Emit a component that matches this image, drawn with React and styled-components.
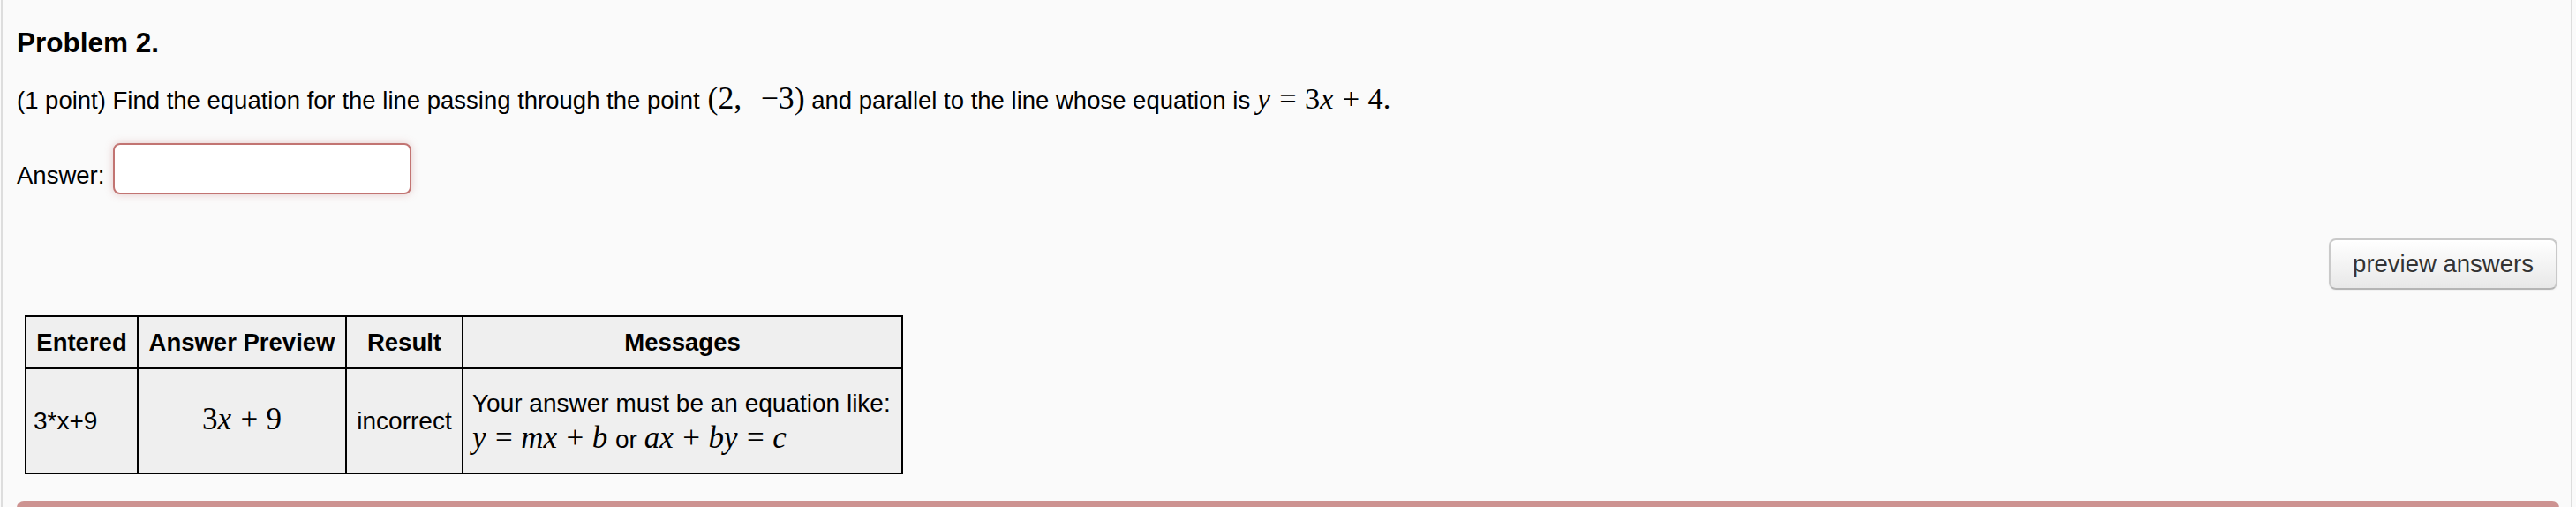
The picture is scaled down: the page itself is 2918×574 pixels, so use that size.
import React from 'react'
import styled, { createGlobalStyle } from 'styled-components'

const GlobalStyle = createGlobalStyle`
  html, body {
    margin: 0;
    padding: 0;
    background: #fafafa;
  }
  body {
    font-family: "Liberation Sans", Arial, sans-serif;
    color: #000;
  }
`

const Page = styled.div`
  margin: 0 4px 0 1px;
  padding: 30px 13px 0 16px;
  border-left: 2px solid #dddddd;
  border-right: 2px solid #dddddd;
  min-height: 600px;
  box-sizing: border-box;
  display: flex;
  flex-direction: column;
`

const Title = styled.h3`
  margin: 0;
  font-size: 31.5px;
  line-height: 36px;
  font-weight: bold;
`

const Problem = styled.p`
  margin: 31px 0 0;
  font-size: 27.5px;
  line-height: 34px;
`

const Math = styled.span`
  font-family: "Liberation Serif", "Times New Roman", serif;
  font-size: ${p => p.$size || 1.25}em;
  line-height: 0;
  white-space: nowrap;
`

const Var = styled.i`
  font-style: italic;
  margin-right: 0.03em;
`

const Op = styled.span`
  margin: 0 ${p => (p.$tight ? '0.3em' : '0.27em')};
`

const AnswerRow = styled.div`
  margin-top: 31px;
  display: flex;
  align-items: flex-end;
  gap: 10px;
`

const Label = styled.span`
  font-size: 27.5px;
  line-height: 34px;
  padding-bottom: 4px;
`

const AnswerInput = styled.input`
  width: 338px;
  height: 58px;
  box-sizing: border-box;
  border: 2px solid #c27472;
  border-radius: 8px;
  background: #fff;
  box-shadow: 0 0 10px rgba(190, 110, 110, 0.35);
  outline: none;
  font-size: 26px;
  padding: 0 10px;
`

const ButtonRow = styled.div`
  margin-top: 50px;
  display: flex;
  justify-content: flex-end;
`

const PreviewButton = styled.button`
  width: 259px;
  height: 58px;
  margin-right: 2px;
  box-sizing: border-box;
  border: 2px solid #c9c9c9;
  border-bottom-color: #b5b5b5;
  border-radius: 8px;
  background: linear-gradient(#ffffff, #e8e8e8);
  box-shadow: inset 0 2px 0 rgba(255, 255, 255, 0.6), 0 1px 2px rgba(0, 0, 0, 0.05);
  font-family: "Liberation Sans", Arial, sans-serif;
  font-size: 27.5px;
  color: #333;
  cursor: pointer;
`

const Results = styled.table`
  margin: 29px 0 0 9px;
  border-collapse: collapse;
  border: 2px solid #000;
  background: #efefef;
  font-size: 28px;
  align-self: flex-start;
`

const Th = styled.th`
  width: ${p => p.$w}px;
  height: 59px;
  padding: 0 5px;
  border: 2px solid #000;
  font-size: 27.5px;
  font-weight: bold;
  text-align: center;
  box-sizing: border-box;
`

const Td = styled.td`
  height: 117px;
  padding: 0 ${p => p.$pad || 8}px;
  border: 2px solid #000;
  text-align: ${p => p.$align || 'center'};
  vertical-align: middle;
  line-height: 41px;
`

const Bar = styled.div`
  margin-top: 30px;
  height: 60px;
  background: #cd9391;
  border-radius: 8px 8px 0 0;
`

export default function App() {
  return (
    <>
      <GlobalStyle />
      <Page>
        <Title>Problem 2.</Title>
        <Problem>
          (1 point) Find the equation for the line passing through the point
          <Math $size={1.3}>
            {' '}(2,<Op $tight />−3)
          </Math>{' '}
          and parallel to the line whose equation is{' '}
          <Math>
            <Var>y</Var>
            <Op>=</Op>3<Var>x</Var>
            <Op>+</Op>4.
          </Math>
        </Problem>
        <AnswerRow>
          <Label>Answer:</Label>
          <AnswerInput type="text" aria-label="answer" />
        </AnswerRow>
        <ButtonRow>
          <PreviewButton type="button">preview answers</PreviewButton>
        </ButtonRow>
        <Results>
          <thead>
            <tr>
              <Th $w={127}>Entered</Th>
              <Th $w={236}>Answer Preview</Th>
              <Th $w={132}>Result</Th>
              <Th $w={498}>Messages</Th>
            </tr>
          </thead>
          <tbody>
            <tr>
              <Td $align="left">3*x+9</Td>
              <Td>
                <Math>
                  3<Var>x</Var>
                  <Op>+</Op>9
                </Math>
              </Td>
              <Td $pad={4}>incorrect</Td>
              <Td $align="left" $pad={10}>
                Your answer must be an equation like:
                <br />
                <Math>
                  <Var>y</Var>
                  <Op>=</Op>
                  <Var>mx</Var>
                  <Op>+</Op>
                  <Var>b</Var>
                </Math>{' '}
                or{' '}
                <Math>
                  <Var>ax</Var>
                  <Op>+</Op>
                  <Var>by</Var>
                  <Op>=</Op>
                  <Var>c</Var>
                </Math>
              </Td>
            </tr>
          </tbody>
        </Results>
        <Bar />
      </Page>
    </>
  )
}
